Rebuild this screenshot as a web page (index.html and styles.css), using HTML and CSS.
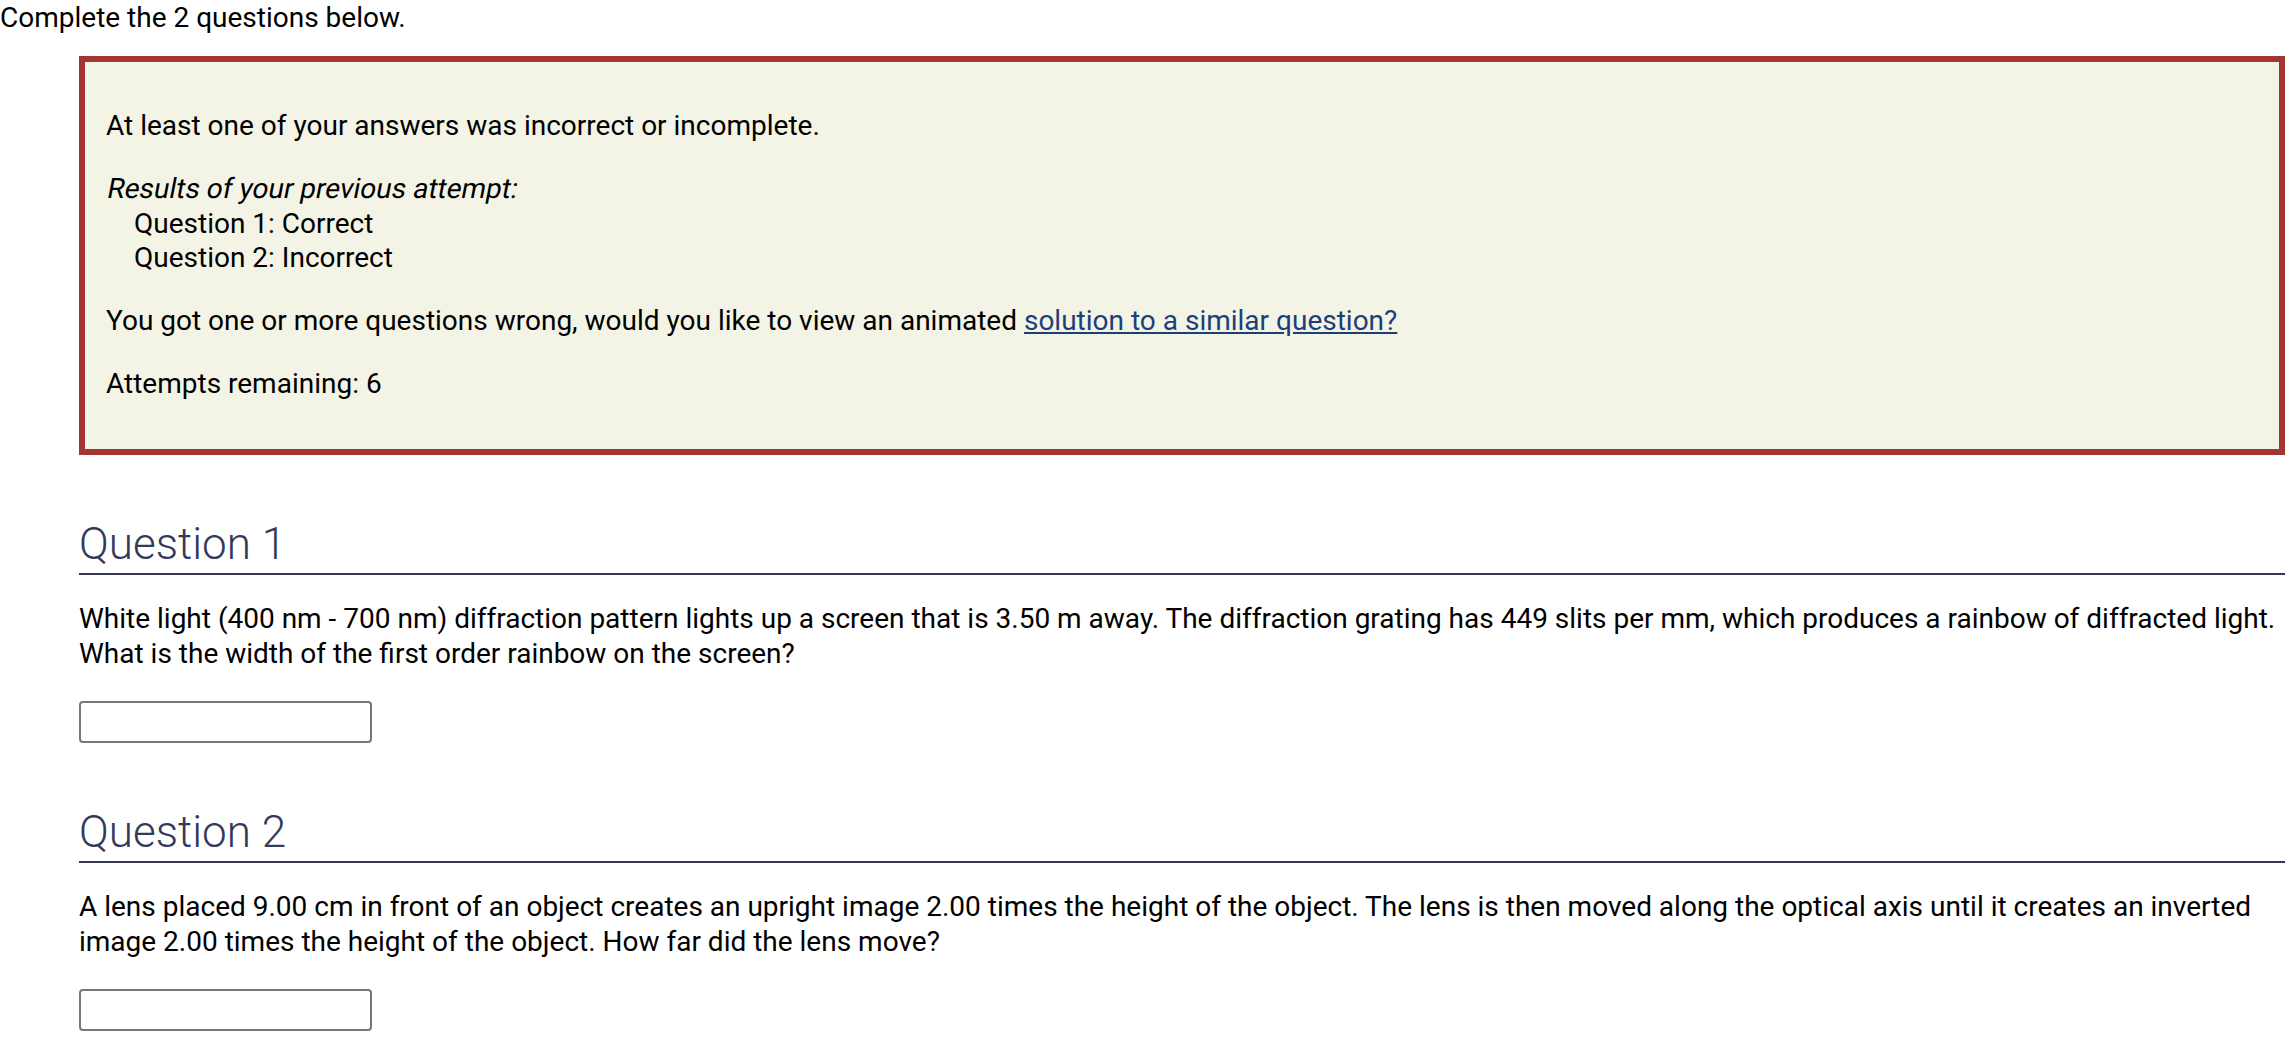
FILE: index.html
```html
<!DOCTYPE html>
<html lang="en">
<head>
<meta charset="utf-8">
<title>Questions</title>
<link rel="stylesheet" href="styles.css">
</head>
<body>
<div class="intro">Complete the 2 questions below.</div>
<main class="content">
  <section class="alert">
    <p>At least one of your answers was incorrect or incomplete.</p>
    <p><em class="slanted">Results of your previous attempt:</em><br>
      <span class="result">Question 1: Correct</span><br>
      <span class="result">Question 2: Incorrect</span></p>
    <p>You got one or more questions wrong, would you like to view an animated <a href="#" class="link">solution to a similar question?</a></p>
    <p>Attempts remaining: 6</p>
  </section>

  <section class="question">
    <h2 class="q-title">Question 1</h2>
    <p class="q-text">White light (400 nm - 700 nm) diffraction pattern lights up a screen that is 3.50 m away. The diffraction grating has 449 slits per mm, which produces a rainbow of diffracted light. What is the width of the first order rainbow on the screen?</p>
    <input class="answer" type="text">
  </section>

  <section class="question">
    <h2 class="q-title">Question 2</h2>
    <p class="q-text">A lens placed 9.00 cm in front of an object creates an upright image 2.00 times the height of the object. The lens is then moved along the optical axis until it creates an inverted image 2.00 times the height of the object. How far did the lens move?</p>
    <input class="answer" type="text">
  </section>
</main>
</body>
</html>
```

FILE: styles.css
```css
html, body {
  margin: 0;
  padding: 0;
  background: #ffffff;
}

body {
  font-family: Roboto, "Liberation Sans", sans-serif;
  font-size: 28px;
  line-height: 34.5px;
  color: #000000;
}

.intro {
  padding-top: 1px;
}

.content {
  margin: 20px 7px 0 79px;
}

.alert {
  border: 6px solid #a33535;
  background: #f3f4e5;
  padding: 19px 21px;
}

.alert p {
  margin: 28.5px 0;
}

.slanted {
  display: inline-block;
  font-style: normal;
  transform: skewX(-11deg);
  transform-origin: 0 75%;
}

.result {
  display: inline-block;
  padding-left: 28px;
}

.link {
  color: #1d3f78;
  text-decoration: underline;
}

.q-title {
  margin: 62px 0 0;
  font-size: 44px;
  font-weight: 300;
  line-height: 54px;
  color: #343a5a;
  padding-bottom: 2px;
  border-bottom: 2px solid #343a5a;
}

.q-text {
  margin: 27px 0 30px;
}

.answer {
  display: block;
  box-sizing: border-box;
  width: 293px;
  height: 42px;
  margin: 0;
  border: 2px solid #767676;
  border-radius: 4px;
  background: #ffffff;
  font: inherit;
}
```
